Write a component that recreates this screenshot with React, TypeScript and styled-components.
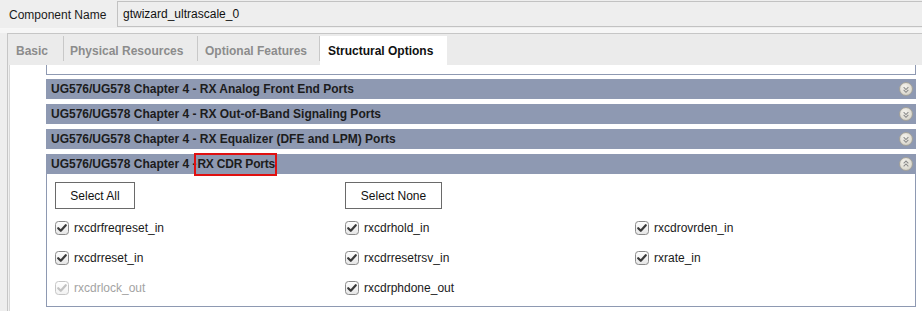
import React from "react";
import styled, { createGlobalStyle } from "styled-components";

const Global = createGlobalStyle`
  html, body { margin: 0; padding: 0; background: #eeeeee; }
  body { font-family: "Liberation Sans", Arial, sans-serif; font-size: 12px; color: #1a1a1a; }
  * { box-sizing: border-box; }
`;

const Root = styled.div`
  width: 922px;
  height: 311px;
  overflow: hidden;
  display: flex;
  flex-direction: column;
  background: #eeeeee;
`;

const NameRow = styled.div`
  display: flex;
  align-items: center;
  height: 29px;
  padding: 2px 0 0 9px;
  border-bottom: 1px solid #f7f7f7;
`;

const NameLabel = styled.span`
  width: 108px;
  color: #1a1a1a;
`;

const NameInput = styled.div`
  flex: 1;
  height: 26px;
  margin-top: -2px;
  border: 1px solid #c2c2c2;
  border-right: none;
  background: #eeeeee;
  display: flex;
  align-items: center;
  padding-left: 5px;
  color: #111;
`;

const Strip = styled.div`
  height: 4px;
  background: #f6f6f6;
`;

const Pane = styled.div`
  flex: 1;
  margin-left: 7px;
  border-top: 1px solid #c6c6c6;
  border-left: 1px solid #c6c6c6;
  display: flex;
  flex-direction: column;
  background: #f0f0f0;
`;

const TabBar = styled.div`
  height: 31px;
  display: flex;
  align-items: flex-start;
  background: #ebebeb;
`;

const Tab = styled.div<{ $w: number; $pl: number; $active?: boolean }>`
  width: ${(p) => p.$w}px;
  height: 29px;
  margin-top: 2px;
  padding-left: ${(p) => p.$pl}px;
  display: flex;
  align-items: center;
  font-weight: bold;
  color: ${(p) => (p.$active ? "#111" : "#8c8c8c")};
  background: ${(p) => (p.$active ? "#ffffff" : "transparent")};
`;

const TabSep = styled.div`
  width: 1px;
  height: 25px;
  margin-top: 2px;
  background: #c8c8c8;
`;

const Content = styled.div`
  flex: 1;
  margin-left: 1px;
  border-left: 1px solid #d8d8d8;
  background: #ffffff;
  padding: 0 6px 0 36px;
  display: flex;
  flex-direction: column;
`;

const Scroll = styled.div`
  display: flex;
  flex-direction: column;
`;

const PrevBox = styled.div`
  height: 10px;
  border: 1px solid #8e99b2;
  border-top: none;
  margin-bottom: 4px;
`;

const SectionHeader = styled.div<{ $gap?: number }>`
  height: 20px;
  background: #8e99b2;
  display: flex;
  align-items: center;
  justify-content: space-between;
  padding: 0 3px 0 5px;
  margin-bottom: ${(p) => p.$gap ?? 0}px;
  font-weight: bold;
  color: #1c1c1c;
`;

const Title = styled.span`
  white-space: pre;
`;

const Highlight = styled.span`
  border: 2px solid #e01010;
  padding: 2px 0 3px 1px;
  margin-left: -2px;
  letter-spacing: -0.2px;
`;

const Body = styled.div`
  border: 1px solid #8e99b2;
  border-top: none;
  padding: 8px 0 3px 8px;
  display: grid;
  grid-template-columns: 290px 290px 1fr;
  grid-template-rows: 31px 30px 30px 30px;
`;

const ButtonCell = styled.div`
  align-self: start;
`;

const Button = styled.div<{ $w: number }>`
  width: ${(p) => p.$w}px;
  height: 27px;
  border: 1px solid #6a6a6a;
  background: #ffffff;
  display: flex;
  align-items: center;
  justify-content: center;
  color: #111;
`;

const CheckRow = styled.div`
  display: flex;
  align-items: center;
  gap: 5px;
`;

const CheckLabel = styled.span<{ $disabled?: boolean }>`
  color: ${(p) => (p.$disabled ? "#a3a3a3" : "#1a1a1a")};
`;

const Empty = styled.div``;

function Check({ disabled }: { disabled?: boolean }) {
  const stroke = disabled ? "#c6c6c6" : "#8a8a8a";
  const mark = disabled ? "#c2c2c2" : "#3a3a3a";
  const id = disabled ? "cbgd" : "cbg";
  return (
    <svg width="14" height="14" viewBox="0 0 14 14">
      <defs>
        <linearGradient id={id} x1="0" y1="0" x2="0" y2="1">
          <stop offset="0" stopColor="#ffffff" />
          <stop offset="1" stopColor={disabled ? "#f2f2f2" : "#e6e6e6"} />
        </linearGradient>
      </defs>
      <rect x="0.5" y="0.5" width="13" height="13" rx="3" fill={`url(#${id})`} stroke={stroke} />
      <path d="M3.2 7.2 L5.8 9.8 L10.8 4.2" fill="none" stroke={mark} strokeWidth="2.2" strokeLinecap="round" strokeLinejoin="round" />
    </svg>
  );
}

function Toggle({ up }: { up?: boolean }) {
  const d1 = up ? "M4.3 7.2 L6.5 5 L8.7 7.2" : "M4.3 4.8 L6.5 7 L8.7 4.8";
  const d2 = up ? "M4.3 9.8 L6.5 7.6 L8.7 9.8" : "M4.3 7.4 L6.5 9.6 L8.7 7.4";
  const dy = up ? -1.2 : 0;
  return (
    <svg width="14" height="14" viewBox="0 0 13 13">
      <defs>
        <radialGradient id="tg" cx="0.4" cy="0.35" r="0.7">
          <stop offset="0" stopColor="#f6f4ee" />
          <stop offset="1" stopColor="#d6d3c8" />
        </radialGradient>
      </defs>
      <circle cx="6.5" cy="6.5" r="6" fill="url(#tg)" stroke="#a19f96" strokeWidth="0.9" />
      <g transform={`translate(0 ${dy})`}>
        <path d={d1} fill="none" stroke="#8a8a8a" strokeWidth="1" />
        <path d={d2} fill="none" stroke="#8a8a8a" strokeWidth="1" />
      </g>
    </svg>
  );
}

const rows: { label: string; disabled?: boolean }[][] = [
  [{ label: "rxcdrfreqreset_in" }, { label: "rxcdrhold_in" }, { label: "rxcdrovrden_in" }],
  [{ label: "rxcdrreset_in" }, { label: "rxcdrresetrsv_in" }, { label: "rxrate_in" }],
  [{ label: "rxcdrlock_out", disabled: true }, { label: "rxcdrphdone_out" }],
];

export default function App() {
  return (
    <Root>
      <Global />
      <NameRow>
        <NameLabel>Component Name</NameLabel>
        <NameInput>gtwizard_ultrascale_0</NameInput>
      </NameRow>
      <Strip />
      <Pane>
        <TabBar>
          <Tab $w={55} $pl={8}>Basic</Tab>
          <TabSep />
          <Tab $w={133} $pl={6}>Physical Resources</Tab>
          <TabSep />
          <Tab $w={121} $pl={7}>Optional Features</Tab>
          <TabSep />
          <Tab $w={127} $pl={8} $active>Structural Options</Tab>
        </TabBar>
        <Content>
          <Scroll>
            <PrevBox />
            <SectionHeader $gap={5}>
              <Title>UG576/UG578 Chapter 4 - RX Analog Front End Ports</Title>
              <Toggle />
            </SectionHeader>
            <SectionHeader $gap={5}>
              <Title>UG576/UG578 Chapter 4 - RX Out-of-Band Signaling Ports</Title>
              <Toggle />
            </SectionHeader>
            <SectionHeader $gap={5}>
              <Title>UG576/UG578 Chapter 4 - RX Equalizer (DFE and LPM) Ports</Title>
              <Toggle />
            </SectionHeader>
            <SectionHeader>
              <Title>
                UG576/UG578 Chapter 4 -<Highlight>RX CDR Ports</Highlight>
              </Title>
              <Toggle up />
            </SectionHeader>
            <Body>
              <ButtonCell>
                <Button $w={80}>Select All</Button>
              </ButtonCell>
              <ButtonCell>
                <Button $w={97}>Select None</Button>
              </ButtonCell>
              <Empty />
              {rows.map((r, ri) =>
                [0, 1, 2].map((ci) => {
                  const item = r[ci];
                  if (!item) return <Empty key={`${ri}-${ci}`} />;
                  return (
                    <CheckRow key={`${ri}-${ci}`}>
                      <Check disabled={item.disabled} />
                      <CheckLabel $disabled={item.disabled}>{item.label}</CheckLabel>
                    </CheckRow>
                  );
                })
              )}
            </Body>
          </Scroll>
        </Content>
      </Pane>
    </Root>
  );
}
